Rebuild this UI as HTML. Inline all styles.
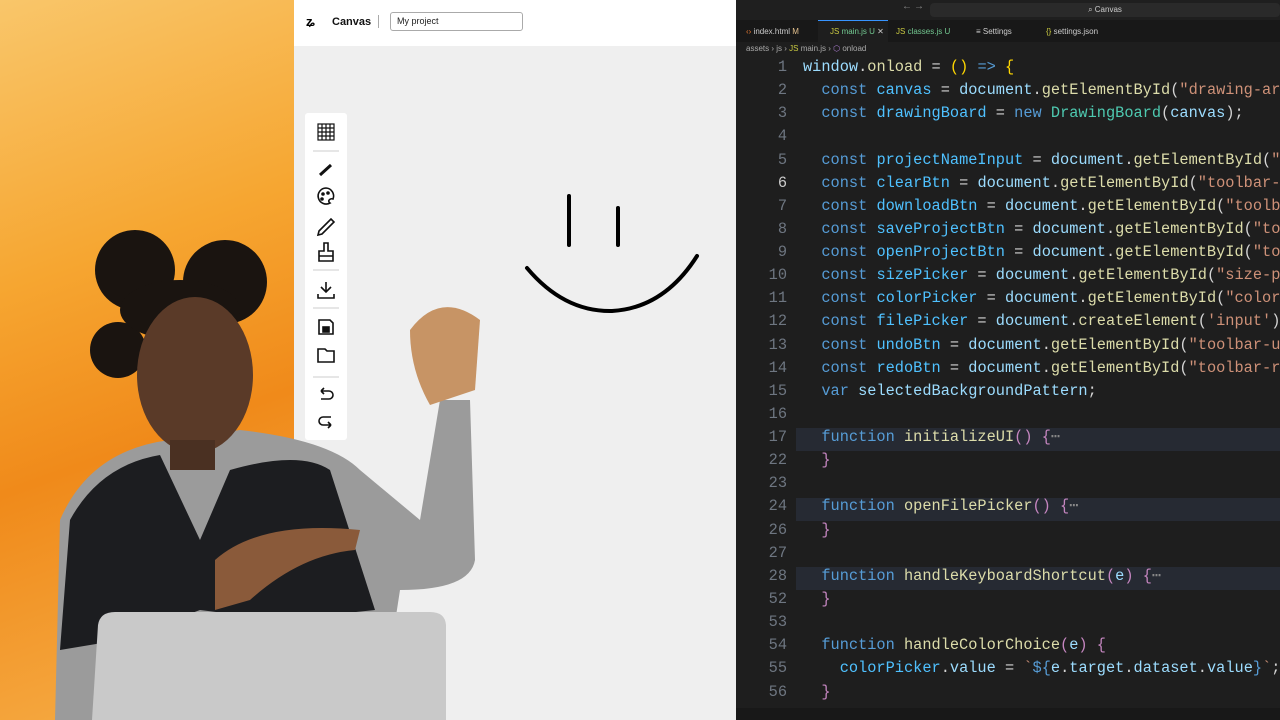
<!DOCTYPE html>
<html><head><meta charset="utf-8"><style>
*{margin:0;padding:0;box-sizing:border-box}
body{width:1280px;height:720px;overflow:hidden;position:relative;font-family:"Liberation Sans",sans-serif;background:#1e1e1e}
.abs{position:absolute}
#left{left:0;top:0;width:294px;height:720px;background:linear-gradient(160deg,#f9c66a 0%,#f6a631 35%,#f08a1a 60%,#f6b04a 100%)}
#web{left:294px;top:0;width:442px;height:720px;background:#efefef}
#hdr{left:0;top:0;width:442px;height:46px;background:#fff}
#vs{left:736px;top:0;width:544px;height:720px;background:#1e1e1e;font-family:"Liberation Mono",monospace}
.code{position:absolute;left:67px;font-size:15.3px;white-space:pre;color:#d4d4d4;height:23.13px;line-height:23.13px}
.ln{position:absolute;left:0;width:51px;text-align:right;font-size:15.3px;color:#6e7681;height:23.13px;line-height:23.13px}
.k{color:#569cd6}.v{color:#9cdcfe}.c{color:#4fc1ff}.f{color:#dcdcaa}.s{color:#ce9178}.t{color:#4ec9b0}.p{color:#c586c0}.y{color:#ffd700}
.hl{position:absolute;left:60px;width:484px;height:23px;background:#262a33}
.tab{position:absolute;top:22px;font-size:8px;font-family:"Liberation Sans",sans-serif;color:#ccc}
</style></head><body>
<div id="left" class="abs"></div>
<div id="web" class="abs">
 <div id="hdr" class="abs">
  <div class="abs" style="left:12px;top:14px;font-size:13px;font-weight:bold">ʑ</div>
  <div class="abs" style="left:38px;top:16px;font-size:11px;font-weight:bold;color:#111">Canvas</div>
  <div class="abs" style="left:84px;top:15px;width:1px;height:13px;background:#aaa"></div>
  <div class="abs" style="left:96px;top:12px;width:133px;height:19px;border:1px solid #aaa;border-radius:3px;font-size:9px;padding:3px 6px;color:#222">My project</div>
 </div>
 <div class="abs" style="left:11px;top:113px;width:42px;height:327px;background:#fff;border-radius:3px"></div>
 <svg class="abs" style="left:11px;top:113px" width="42" height="327" viewBox="0 0 42 327" fill="none" stroke="#111" stroke-width="1.6">
  <g stroke-width="1.2"><rect x="13" y="11" width="16" height="16"/><path d="M17 11v16M21 11v16M25 11v16M13 15h16M13 19h16M13 23h16"/></g>
  <path d="M8 38h26M8 157h26M8 195h26M8 264h26" stroke="#ccc" stroke-width="1"/>
  <path d="M15 62l11-10" stroke-width="3"/>
  <path d="M21 75a8 8 0 1 0 4 15c-3-2 0-5 3-4a8 8 0 0 0-7-11z"/><circle cx="18" cy="81" r="1" fill="#111"/><circle cx="23" cy="80" r="1" fill="#111"/><circle cx="17" cy="86" r="1" fill="#111"/>
  <path d="M14 118l12-12 3 3-12 12-4 1z"/>
  <path d="M19 130h4v8h5v5h-14v-5h5zM14 143v5h14v-5"/>
  <path d="M21 169v10M16 174l5 5 5-5M13 181v4h16v-4"/>
  <path d="M14 207h11l3 3v11h-14z"/><rect x="18" y="214" width="6" height="5" fill="#111"/>
  <path d="M13 236h7l2 2h7v11h-16z"/>
  <path d="M16 278h8a4 4 0 0 1 0 8h-8M16 278l3-3M16 278l3 3"/>
  <path d="M26 304h-8a4 4 0 0 0 0 8h8M26 312l-3-3M26 312l-3 3"/>
 </svg>
 <svg class="abs" style="left:0;top:0" width="442" height="720" fill="none" stroke="#000" stroke-width="4" stroke-linecap="round">
  <path d="M275 196v49M324 208v37"/>
  <path d="M233 268Q270 312 318 311Q370 308 403 256"/>
 </svg>
</div>
<svg class="abs" style="left:0;top:0" width="736" height="720">
 <path d="M55 720L60 520Q90 450 170 440L240 430Q330 440 360 470L420 520L440 400L470 400L475 560Q470 590 400 590L380 720Z" fill="#9b9b9b"/>
 <path d="M70 520Q100 465 160 455L200 540L230 470Q300 450 330 470L375 610L280 620L200 610L120 640L60 650Z" fill="#1c1d20"/>
 <circle cx="135" cy="270" r="40" fill="#1a1410"/><circle cx="225" cy="282" r="42" fill="#1a1410"/><circle cx="118" cy="350" r="28" fill="#1a1410"/>
 <ellipse cx="180" cy="310" rx="60" ry="30" fill="#1a1410"/>
 <ellipse cx="195" cy="375" rx="58" ry="78" fill="#5a3a28"/>
 <path d="M170 440h45v30h-45z" fill="#4a3022"/>
 <path d="M410 330Q440 290 480 320L475 390L430 405Q410 370 410 330Z" fill="#c79465"/>
 <path d="M215 560Q260 520 360 530L355 550Q300 555 250 600L215 610Z" fill="#8a5a3a"/>
 <path d="M92 720L98 625Q100 612 115 612H430Q445 612 446 625V720Z" fill="#c9c9c9"/>
</svg>
<div id="vs" class="abs">
 <div class="abs" style="left:0;top:0;width:544px;height:20px;background:#1f1f1f"></div>
 <div class="abs" style="left:194px;top:3px;width:350px;height:14px;background:#2a2a2a;border-radius:4px;font-size:8px;color:#ccc;text-align:center;line-height:14px;font-family:'Liberation Sans',sans-serif">⌕ Canvas</div>
 <div class="abs" style="left:168px;top:2px;font-size:10px;color:#888">← →</div>
 <div class="abs" style="left:0;top:20px;width:544px;height:22px;background:#181818"></div>
 <div class="abs" style="left:82px;top:20px;width:70px;height:22px;background:#1e1e1e;border-top:1px solid #3794ff"></div>
 <div class="tab" style="left:10px;top:27px"><span style="color:#e37933">‹›</span> index.html <span style="color:#e2c08d">M</span></div>
 <div class="tab" style="left:94px;top:27px;color:#73c991"><span style="color:#cbcb41">JS</span> main.js U <span style="color:#ccc">✕</span></div>
 <div class="tab" style="left:160px;top:27px;color:#73c991"><span style="color:#cbcb41">JS</span> classes.js U</div>
 <div class="tab" style="left:240px;top:27px">≡ Settings</div>
 <div class="tab" style="left:310px;top:27px"><span style="color:#cbcb41">{}</span> settings.json</div>
 <div class="tab" style="left:10px;top:44px;color:#aaa">assets › js › <span style="color:#cbcb41">JS</span> main.js › <span style="color:#b180d7">⬡</span> onload</div>
 <div class="hl" style="top:428px"></div><div class="hl" style="top:498px"></div><div class="hl" style="top:567px"></div>
 <div style="position:absolute;left:0;top:56px;width:544px">
 <div class="ln" style="top:0">1</div><div class="code" style="top:0"><span class="v">window</span>.<span class="f">onload</span> = <span class="y">()</span> <span class="k">=&gt;</span> <span class="y">{</span></div>
 <div class="ln" style="top:23.13px">2</div><div class="code" style="top:23.13px">  <span class="k">const</span> <span class="c">canvas</span> = <span class="v">document</span>.<span class="f">getElementById</span>(<span class="s">"drawing-ar</span></div>
 <div class="ln" style="top:46.26px">3</div><div class="code" style="top:46.26px">  <span class="k">const</span> <span class="c">drawingBoard</span> = <span class="k">new</span> <span class="t">DrawingBoard</span>(<span class="v">canvas</span>);</div>
 <div class="ln" style="top:69.39px">4</div>
 <div class="ln" style="top:92.52px">5</div><div class="code" style="top:92.52px">  <span class="k">const</span> <span class="c">projectNameInput</span> = <span class="v">document</span>.<span class="f">getElementById</span>(<span class="s">"</span></div>
 <div class="ln" style="top:115.65px;color:#ccc">6</div><div class="code" style="top:115.65px">  <span class="k">const</span> <span class="c">clearBtn</span> = <span class="v">document</span>.<span class="f">getElementById</span>(<span class="s">"toolbar-</span></div>
 <div class="ln" style="top:138.78px">7</div><div class="code" style="top:138.78px">  <span class="k">const</span> <span class="c">downloadBtn</span> = <span class="v">document</span>.<span class="f">getElementById</span>(<span class="s">"toolb</span></div>
 <div class="ln" style="top:161.91px">8</div><div class="code" style="top:161.91px">  <span class="k">const</span> <span class="c">saveProjectBtn</span> = <span class="v">document</span>.<span class="f">getElementById</span>(<span class="s">"to</span></div>
 <div class="ln" style="top:185.04px">9</div><div class="code" style="top:185.04px">  <span class="k">const</span> <span class="c">openProjectBtn</span> = <span class="v">document</span>.<span class="f">getElementById</span>(<span class="s">"to</span></div>
 <div class="ln" style="top:208.17px">10</div><div class="code" style="top:208.17px">  <span class="k">const</span> <span class="c">sizePicker</span> = <span class="v">document</span>.<span class="f">getElementById</span>(<span class="s">"size-p</span></div>
 <div class="ln" style="top:231.3px">11</div><div class="code" style="top:231.3px">  <span class="k">const</span> <span class="c">colorPicker</span> = <span class="v">document</span>.<span class="f">getElementById</span>(<span class="s">"color</span></div>
 <div class="ln" style="top:254.43px">12</div><div class="code" style="top:254.43px">  <span class="k">const</span> <span class="c">filePicker</span> = <span class="v">document</span>.<span class="f">createElement</span>(<span class="s">'input'</span>)</div>
 <div class="ln" style="top:277.56px">13</div><div class="code" style="top:277.56px">  <span class="k">const</span> <span class="c">undoBtn</span> = <span class="v">document</span>.<span class="f">getElementById</span>(<span class="s">"toolbar-u</span></div>
 <div class="ln" style="top:300.69px">14</div><div class="code" style="top:300.69px">  <span class="k">const</span> <span class="c">redoBtn</span> = <span class="v">document</span>.<span class="f">getElementById</span>(<span class="s">"toolbar-r</span></div>
 <div class="ln" style="top:323.82px">15</div><div class="code" style="top:323.82px">  <span class="k">var</span> <span class="v">selectedBackgroundPattern</span>;</div>
 <div class="ln" style="top:346.95px">16</div>
 <div class="ln" style="top:370.08px">17</div><div class="code" style="top:370.08px">  <span class="k">function</span> <span class="f">initializeUI</span><span class="p">()</span> <span class="p">{</span><span style="color:#888">⋯</span></div>
 <div class="ln" style="top:393.21px">22</div><div class="code" style="top:393.21px">  <span class="p">}</span></div>
 <div class="ln" style="top:416.34px">23</div>
 <div class="ln" style="top:439.47px">24</div><div class="code" style="top:439.47px">  <span class="k">function</span> <span class="f">openFilePicker</span><span class="p">()</span> <span class="p">{</span><span style="color:#888">⋯</span></div>
 <div class="ln" style="top:462.6px">26</div><div class="code" style="top:462.6px">  <span class="p">}</span></div>
 <div class="ln" style="top:485.73px">27</div>
 <div class="ln" style="top:508.86px">28</div><div class="code" style="top:508.86px">  <span class="k">function</span> <span class="f">handleKeyboardShortcut</span><span class="p">(</span><span class="v">e</span><span class="p">)</span> <span class="p">{</span><span style="color:#888">⋯</span></div>
 <div class="ln" style="top:531.99px">52</div><div class="code" style="top:531.99px">  <span class="p">}</span></div>
 <div class="ln" style="top:555.12px">53</div>
 <div class="ln" style="top:578.25px">54</div><div class="code" style="top:578.25px">  <span class="k">function</span> <span class="f">handleColorChoice</span><span class="p">(</span><span class="v">e</span><span class="p">)</span> <span class="p">{</span></div>
 <div class="ln" style="top:601.38px">55</div><div class="code" style="top:601.38px">    <span class="c">colorPicker</span>.<span class="v">value</span> = <span class="s">`</span><span class="k">${</span><span class="v">e</span>.<span class="v">target</span>.<span class="v">dataset</span>.<span class="v">value</span><span class="k">}</span><span class="s">`</span>;</div>
 <div class="ln" style="top:624.51px">56</div><div class="code" style="top:624.51px">  <span class="p">}</span></div>
 </div>
 <div class="abs" style="left:0;top:708px;width:544px;height:12px;background:#181818"></div>
</div>
</body></html>
